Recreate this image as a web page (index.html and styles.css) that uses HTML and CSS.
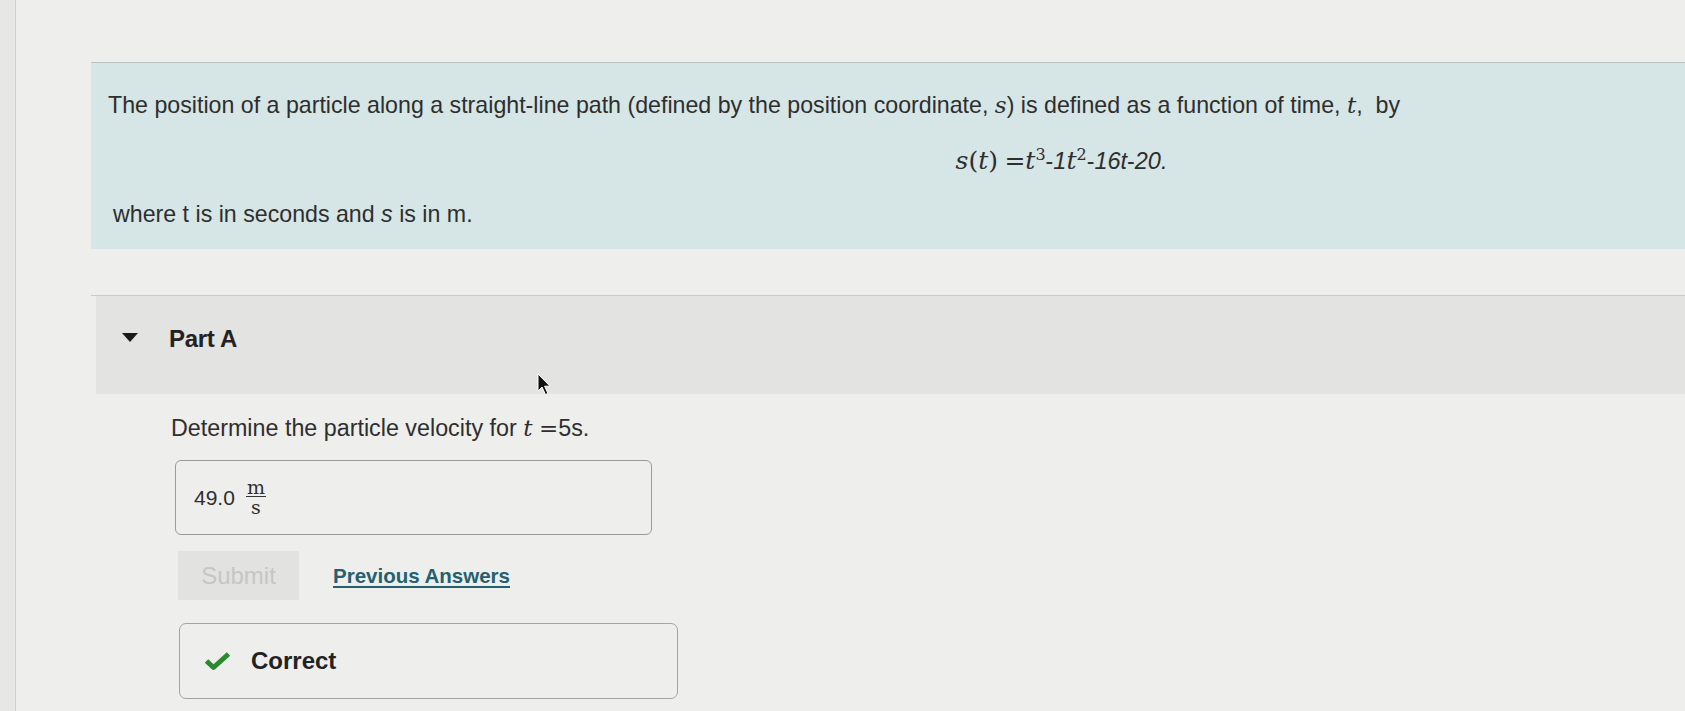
FILE: index.html
```html
<!DOCTYPE html>
<html>
<head>
<meta charset="utf-8">
<link rel="stylesheet" href="styles.css">
</head>
<body>
<div class="page">
  <div class="gutter"></div>
  <div class="content">
    <section class="intro">
      <p class="line1">The position of a particle along a straight-line path (defined by the position coordinate, <i class="m">s</i>) is defined as a function of time, <i class="m">t</i>,&nbsp; by</p>
      <p class="formula"><i class="m">s</i><span class="m">(</span><i class="m">t</i><span class="m">)</span> <span class="m">=</span><i class="m">t</i><sup class="m">3</sup>-<i>1</i><i class="m">t</i><sup class="m">2</sup>-<i>16t</i>-<i>20.</i></p>
      <p class="where">where t is in seconds and <i>s</i> is in m.</p>
    </section>
    <section class="part">
      <div class="part-head">
        <span class="tri"></span>
        <span class="part-title">Part A</span>
        <svg class="cursor" width="16" height="24" viewBox="0 0 16 24"><path d="M1 1 L1 18 L5 14 L8.5 21.5 L11 20.5 L7.6 13.2 L13 13.2 Z" fill="#111" stroke="#fff" stroke-width="1"/></svg>
      </div>
      <div class="part-body">
        <p class="question">Determine the particle velocity for <i class="m">t</i> <span class="m">=</span>5s.</p>
        <div class="answer">
          <span class="num">49.0</span>
          <span class="frac"><span class="fn">m</span><span class="fd">s</span></span>
        </div>
        <div class="actions">
          <span class="submit">Submit</span>
          <a class="prev">Previous Answers</a>
        </div>
        <div class="correct">
          <svg class="check" width="28" height="20" viewBox="0 0 28 20"><path d="M2.5 10 L9.5 16.5 L24.5 3" fill="none" stroke="#2a8a2f" stroke-width="5" stroke-linejoin="round"/></svg>
          <span>Correct</span>
        </div>
      </div>
    </section>
  </div>
</div>
</body>
</html>
```
FILE: styles.css
```css
html, body {
  margin: 0;
  padding: 0;
}
body {
  width: 1685px;
  height: 711px;
  overflow: hidden;
  background: #eeeeec;
  font-family: "Liberation Sans", Arial, sans-serif;
  color: #2e2e2e;
}
.page {
  display: flex;
  height: 711px;
}
.gutter {
  width: 15px;
  background: #e7e7e5;
  border-right: 1px solid #cfcfcd;
  flex: none;
}
.content {
  flex: 1;
  padding-top: 62px;
  padding-left: 75px;
}
.intro {
  background: #d6e5e5;
  border-top: 1px solid #b9c3c3;
  height: 187px;
  padding: 0 0 0 17px;
  box-sizing: border-box;
}
.intro p {
  margin: 0;
  font-size: 23.2px;
}
.line1 {
  padding-top: 28px;
  line-height: 28px;
}
.m {
  font-family: "DejaVu Serif", "Liberation Serif", serif;
  font-size: 23px;
}
i.m { font-style: italic; }
span.m { font-style: normal; }
sup.m { font-size: 15px; font-style: normal; }
.formula .m { font-size: 25px; }
.formula sup.m { font-size: 16px; }
.formula {
  text-align: center;
  padding-left: 330px;
  line-height: 28px;
  margin-top: 22px !important;
}
.formula i:not(.m) { font-size: 23.5px; }
.where {
  margin-top: 25px !important;
  line-height: 28px;
  padding-left: 5px;
}
.part {
  margin-top: 46px;
  border-top: 1px solid #c9c9c7;
}
.part-head {
  position: relative;
  background: #e3e3e1;
  height: 98px;
  display: flex;
  align-items: center;
  margin-left: 5px;
}
.tri {
  width: 0;
  height: 0;
  border-left: 8px solid transparent;
  border-right: 8px solid transparent;
  border-top: 9px solid #1a1a1a;
  margin-left: 26px;
  margin-top: -16px;
}
.part-title {
  font-size: 24px;
  font-weight: bold;
  color: #222;
  margin-left: 31px;
  margin-top: -12px;
  letter-spacing: -0.3px;
}
.cursor {
  position: absolute;
  left: 441px;
  top: 77px;
}
.part-body {
  padding-left: 80px;
}
.question {
  font-size: 23.3px;
  margin: 0;
  padding-top: 20px;
  line-height: 28px;
}
.answer {
  margin-top: 18px;
  margin-left: 4px;
  width: 477px;
  height: 75px;
  box-sizing: border-box;
  border: 1.5px solid #9a9a98;
  border-radius: 6px;
  display: flex;
  align-items: center;
  padding-left: 18px;
}
.num {
  font-size: 21px;
}
.frac {
  display: inline-flex;
  flex-direction: column;
  align-items: center;
  margin-left: 11px;
  font-family: "DejaVu Serif", "Liberation Serif", serif;
  font-size: 19px;
  line-height: 20px;
}
.fn {
  border-bottom: 1.5px solid #333;
  padding: 0 1px;
  line-height: 18px;
}
.actions {
  display: flex;
  align-items: center;
  margin-top: 16px;
  margin-left: 7px;
}
.submit {
  width: 121px;
  height: 49px;
  background: #e2e2e0;
  color: #c6c6c4;
  font-size: 24px;
  display: flex;
  align-items: center;
  justify-content: center;
}
.prev {
  margin-left: 34px;
  font-size: 20.5px;
  font-weight: bold;
  color: #25606e;
  text-decoration: underline;
  text-underline-offset: 3px;
}
.correct {
  margin-top: 23px;
  margin-left: 8px;
  width: 499px;
  height: 76px;
  box-sizing: border-box;
  border: 1.5px solid #a4a4a2;
  border-radius: 7px;
  display: flex;
  align-items: center;
  padding-left: 24px;
  font-size: 24px;
  font-weight: bold;
  color: #222;
}
.check {
  margin-right: 19px;
}
```
